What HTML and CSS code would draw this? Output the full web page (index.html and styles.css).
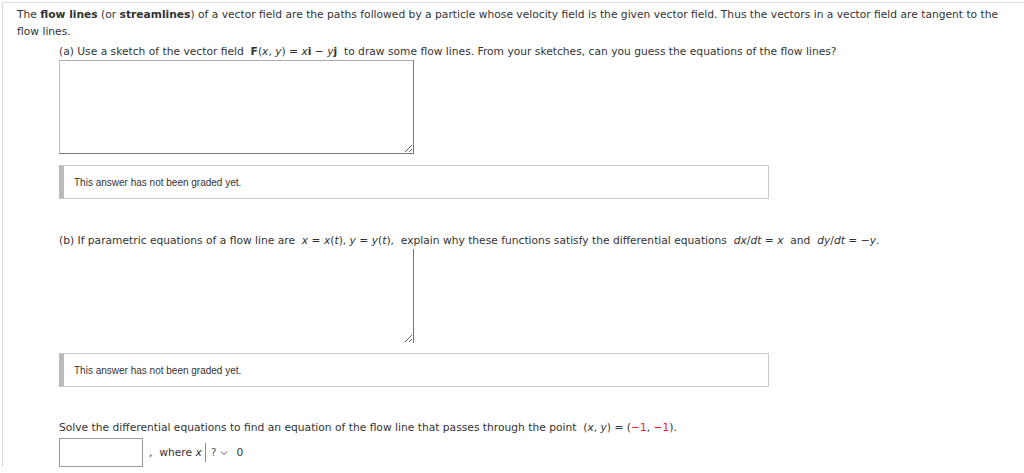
FILE: index.html
```html
<!DOCTYPE html>
<html>
<head>
<meta charset="utf-8">
<link rel="stylesheet" href="styles.css">
</head>
<body>
<div class="question">
  <p class="intro">The <b>flow lines</b> (or <b>streamlines</b>) of a vector field are the paths followed by a particle whose velocity field is the given vector field. Thus the vectors in a vector field are tangent to the flow lines.</p>
  <div class="part">
    <p class="prompt">(a) Use a sketch of the vector field &nbsp;<b>F</b>(<i>x</i>, <i>y</i>) = <i>x</i><b>i</b> &minus; <i>y</i><b>j</b>&nbsp; to draw some flow lines. From your sketches, can you guess the equations of the flow lines?</p>
    <textarea class="essay"></textarea>
    <div class="grade">This answer has not been graded yet.</div>
  </div>
  <div class="part part-b">
    <p class="prompt">(b) If parametric equations of a flow line are &nbsp;<i>x</i> = <i>x</i>(<i>t</i>), <i>y</i> = <i>y</i>(<i>t</i>),&nbsp; explain why these functions satisfy the differential equations &nbsp;<i>dx</i>/<i>dt</i> = <i>x</i>&nbsp; and &nbsp;<i>dy</i>/<i>dt</i> = &minus;<i>y</i>.</p>
    <textarea class="essay essay-b"></textarea>
    <div class="grade">This answer has not been graded yet.</div>
  </div>
  <div class="part part-c">
    <p class="prompt">Solve the differential equations to find an equation of the flow line that passes through the point &nbsp;(<i>x</i>, <i>y</i>) = (<span class="red">&minus;1</span>, <span class="red">&minus;1</span>).</p>
    <div class="answer-row">
      <span class="input-box"></span>
      <span class="where">, &nbsp;where <i>x</i></span>
      <span class="select">? <svg class="chev" width="8" height="6" viewBox="0 0 8 6"><path d="M1 1.5 L4 4.5 L7 1.5" fill="none" stroke="#555" stroke-width="1"/></svg></span>
      <span class="zero">0</span>
    </div>
  </div>
</div>
</body>
</html>
```

FILE: styles.css
```css
html, body {
  margin: 0;
  padding: 0;
  background: #fff;
}
body {
  font-family: "DejaVu Sans", Verdana, sans-serif;
  font-size: 10.7px;
  color: #333;
}
.question {
  margin: 2px 0 0 2px;
  border-top: 1px solid #ddd;
  border-left: 1px solid #ddd;
  padding: 3px 20px 0 14px;
}
p {
  margin: 0;
  line-height: 17px;
}
.intro {
  margin-bottom: 3px;
}
.part {
  padding-left: 42px;
}
.essay {
  display: block;
  box-sizing: border-box;
  width: 355px;
  height: 94px;
  margin: 0;
  padding: 0;
  border-top: 1px solid #aaa;
  border-left: 1px solid #bbb;
  border-right: 1px solid #767676;
  border-bottom: 1px solid #767676;
  background: #fff;
  resize: both;
}
.essay-b {
  border: none;
  border-right: 1px solid #767676;
}
.grade {
  box-sizing: border-box;
  width: 710px;
  height: 34px;
  margin-top: 11px;
  border: 1px solid #ccc;
  border-left: 5px solid #bbb;
  padding-left: 10px;
  font-family: "Liberation Sans", Arial, sans-serif;
  font-size: 10px;
  color: #333;
  display: flex;
  align-items: center;
}
.part-b {
  margin-top: 33px;
}
.part-b .grade {
  margin-top: 10px;
}
.part-c {
  margin-top: 32px;
}
.red {
  color: #e8202a;
}
.answer-row {
  display: flex;
  align-items: center;
  margin-top: 2px;
  height: 29px;
}
.input-box {
  box-sizing: border-box;
  width: 84px;
  height: 29px;
  border: 1px solid #999;
  background: #fff;
}
.where {
  margin-left: 6px;
}
.select {
  margin-left: 3px;
  border-left: 1px solid #888;
  height: 19px;
  padding-left: 5px;
  display: flex;
  align-items: center;
  gap: 4px;
  color: #555;
}
.chev {
  display: block;
}
.zero {
  margin-left: 8px;
}
```
